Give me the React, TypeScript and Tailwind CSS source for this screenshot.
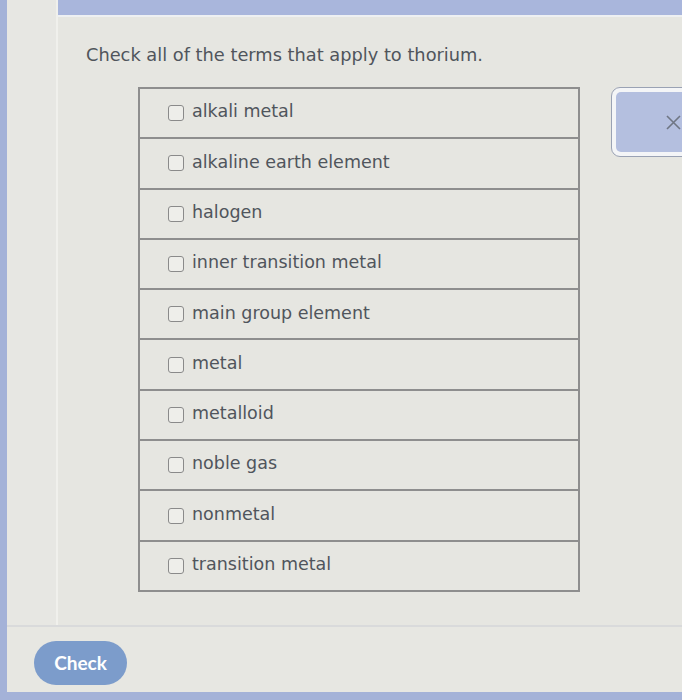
import React from "react";

const items = [
  "alkali metal",
  "alkaline earth element",
  "halogen",
  "inner transition metal",
  "main group element",
  "metal",
  "metalloid",
  "noble gas",
  "nonmetal",
  "transition metal",
];

export default function App() {
  return (
    <div className="w-[682px] h-[700px] overflow-hidden bg-[#a4b2d8] pl-[7px] pb-[8px] flex flex-col">
      <div className="flex-1 flex flex-col bg-[#e6e6e1]">
        <div className="h-[625px] flex flex-row">
          <div className="w-[51px] bg-[#e7e7e3] border-r-2 border-[#f0f0ec]" />
          <div className="flex-1 flex flex-col min-w-0 overflow-hidden">
            <div className="h-[17px] bg-[#a9b6dc] border-b-2 border-[#eef0f2]" />
            <div className="pl-[28px] pt-[26px] flex flex-col">
              <div
                className="text-[17.8px] leading-[24px] text-[#50555c]"
                style={{ fontFamily: '"DejaVu Sans", Verdana, sans-serif' }}
              >
                Check all of the terms that apply to thorium.
              </div>
              <div className="mt-[20px] ml-[52px] flex flex-row items-start">
                <div className="w-[442px] shrink-0 flex flex-col border-2 border-[#8e8e8e] border-b-0">
                  {items.map((t) => (
                    <div
                      key={t}
                      className="h-[50.3px] border-b-2 border-[#8e8e8e] flex items-center pl-[28px] gap-[8px]"
                    >
                      <span className="w-[16px] h-[16px] shrink-0 rounded-[3px] border-[1.5px] border-[#8a8a8a] bg-[#eeeeea]" />
                      <span
                        className="text-[17.5px] text-[#50555c] leading-none pb-[2px]"
                        style={{ fontFamily: '"DejaVu Sans", Verdana, sans-serif' }}
                      >
                        {t}
                      </span>
                    </div>
                  ))}
                </div>
                <div className="ml-[31px] w-[90px] h-[70px] shrink-0 rounded-[9px] border-[1.5px] border-[#9aa2b4] bg-[#f4f5f7] p-[4px]">
                  <div className="w-full h-full rounded-[5px] bg-[#b4bfdf] flex items-center pl-[50px]">
                    <svg width="15" height="15" viewBox="0 0 15 15">
                      <path d="M1 1 L14 14 M14 1 L1 14" stroke="#6f7684" strokeWidth="1.6" fill="none" />
                    </svg>
                  </div>
                </div>
              </div>
            </div>
          </div>
        </div>
        <div className="flex-1 border-t-2 border-[#d9dadb] pl-[27px] pt-[14px] bg-[#e7e7e2]">
          <button
            className="w-[93px] h-[44px] rounded-full bg-[#7c9ccb] text-white text-[19px] font-bold flex items-center justify-center"
            style={{ fontFamily: 'Lato, "Open Sans", sans-serif' }}
          >
            Check
          </button>
        </div>
      </div>
    </div>
  );
}
